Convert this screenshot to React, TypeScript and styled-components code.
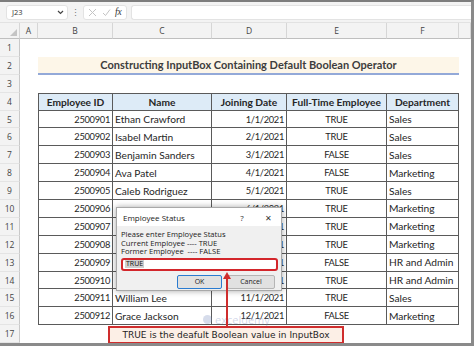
import React from 'react';
import styled, { createGlobalStyle } from 'styled-components';

const GlobalStyle = createGlobalStyle`
  html, body {
    margin: 0;
    padding: 0;
    background: #ffffff;
  }
  * {
    box-sizing: border-box;
  }
`;

const COLS = '20px 18px 75px 99px 75px 100px 72px 1fr';

type Align = 'left' | 'center' | 'right';

interface Employee {
  id: string;
  name: string;
  date: string;
  fullTime: string;
  dept: string;
}

// names of rows 10-14 sit under the dialog in the screenshot, so they stay empty
const employees: Employee[] = [
  { id: '2500901', name: 'Ethan Crawford', date: '1/1/2021', fullTime: 'TRUE', dept: 'Sales' },
  { id: '2500902', name: 'Isabel Martin', date: '2/1/2021', fullTime: 'TRUE', dept: 'Sales' },
  { id: '2500903', name: 'Benjamin Sanders', date: '3/1/2021', fullTime: 'FALSE', dept: 'Sales' },
  { id: '2500904', name: 'Ava Patel', date: '4/1/2021', fullTime: 'FALSE', dept: 'Marketing' },
  { id: '2500905', name: 'Caleb Rodriguez', date: '5/1/2021', fullTime: 'TRUE', dept: 'Sales' },
  { id: '2500906', name: '', date: '6/1/2021', fullTime: 'TRUE', dept: 'Marketing' },
  { id: '2500907', name: '', date: '7/1/2021', fullTime: 'TRUE', dept: 'Marketing' },
  { id: '2500908', name: '', date: '8/1/2021', fullTime: 'TRUE', dept: 'Marketing' },
  { id: '2500909', name: '', date: '9/1/2021', fullTime: 'FALSE', dept: 'HR and Admin' },
  { id: '2500910', name: '', date: '10/1/2021', fullTime: 'TRUE', dept: 'HR and Admin' },
  { id: '2500911', name: 'William Lee', date: '11/1/2021', fullTime: 'TRUE', dept: 'Sales' },
  { id: '2500912', name: 'Grace Jackson', date: '12/1/2021', fullTime: 'FALSE', dept: 'Marketing' },
];

const Frame = styled.div`
  position: relative;
  width: 474px;
  height: 346px;
  overflow: hidden;
  background: #ffffff;
  border-top: 2px solid #7d7d7d;
  border-right: 3px solid #8a8a8a;
  border-bottom: 3px solid #8a8a8a;
  font-family: Lato, 'Open Sans', sans-serif;
`;

/* formula bar */

const FormulaBar = styled.div`
  height: 21px;
  display: flex;
  align-items: center;
  padding-left: 6px;
  background: #f3f3f3;
  border-bottom: 1px solid #e2e2e2;
`;

const NameBox = styled.div`
  width: 62px;
  height: 15px;
  display: flex;
  align-items: center;
  justify-content: space-between;
  padding: 0 3px 0 5px;
  background: #ffffff;
  border: 1px solid #e3e3e3;
  border-radius: 3px;
  font-family: 'Open Sans', sans-serif;
  font-size: 7.5px;
  color: #333;
`;

const Dots = styled.div`
  width: 15px;
  text-align: center;
  font-size: 9px;
  color: #777;
`;

const FxBox = styled.div`
  width: 44px;
  height: 15px;
  display: flex;
  align-items: center;
  justify-content: space-around;
  background: #ffffff;
  border: 1px solid #e3e3e3;
  border-radius: 3px;
  padding: 0 2px;
`;

const FxText = styled.span`
  font-family: 'Liberation Serif', serif;
  font-style: italic;
  font-size: 9.5px;
  color: #333;
`;

const FormulaInput = styled.div`
  flex: 1;
  height: 15px;
  margin-left: 4px;
  background: #ffffff;
  border: 1px solid #e3e3e3;
  border-right: none;
  border-radius: 3px 0 0 3px;
`;

/* sheet */

const Row = styled.div<{ $h: number }>`
  display: grid;
  grid-template-columns: ${COLS};
  height: ${p => p.$h}px;
`;

const ColHead = styled.div`
  position: relative;
  display: flex;
  align-items: center;
  justify-content: center;
  background: #f3f3f3;
  border-right: 1px solid #d6d6d6;
  border-bottom: 1px solid #bfbfbf;
  font-family: 'Open Sans', sans-serif;
  font-size: 8.5px;
  color: #444;
`;

const CornerMark = styled.div`
  position: absolute;
  right: 2px;
  bottom: 2px;
  width: 0;
  height: 0;
  border-left: 7px solid transparent;
  border-bottom: 7px solid #c4c4c4;
`;

const RowNum = styled.div`
  display: flex;
  align-items: center;
  justify-content: center;
  background: #f3f3f3;
  border-right: 1px solid #c9c9c9;
  border-bottom: 1px solid #e4e4e4;
  font-family: 'Open Sans', sans-serif;
  font-size: 8.5px;
  color: #444;
`;

const Blank = styled.div``;

const TitleCell = styled.div`
  grid-column: 3 / 8;
  display: flex;
  align-items: center;
  justify-content: center;
  background: #fdf6e8;
  border-bottom: 2px solid #93a9d8;
  font-weight: 700;
  font-size: 11px;
  color: #3d3d3d;
`;

const Cell = styled.div<{ $align: Align; $head?: boolean; $first?: boolean; $num?: boolean }>`
  display: flex;
  align-items: center;
  justify-content: ${p => (p.$align === 'left' ? 'flex-start' : p.$align === 'right' ? 'flex-end' : 'center')};
  padding: 0 2px;
  white-space: nowrap;
  overflow: hidden;
  background: ${p => (p.$head ? '#ddebf7' : '#ffffff')};
  border-right: 1px solid #5a5a5a;
  border-bottom: 1px solid #5a5a5a;
  border-top: ${p => (p.$head ? '1px solid #5a5a5a' : 'none')};
  border-left: ${p => (p.$first ? '1px solid #5a5a5a' : 'none')};
  font-weight: ${p => (p.$head ? 700 : 400)};
  font-size: ${p => (p.$num ? 9.3 : 10.2)}px;
  letter-spacing: ${p => (p.$num ? '-0.3px' : 'normal')};
  color: #262626;
`;

/* dialog */

const Dialog = styled.div`
  position: absolute;
  left: 116px;
  top: 205px;
  width: 166px;
  height: 84px;
  display: flex;
  flex-direction: column;
  background: #f0f0f0;
  border: 1px solid #a8a8a8;
  box-shadow: 0 0 6px rgba(0, 0, 0, 0.35);
  font-family: 'Open Sans', 'Noto Sans', sans-serif;
`;

const DialogTitle = styled.div`
  height: 18px;
  display: flex;
  align-items: center;
  padding-left: 6px;
  background: #ffffff;
  font-size: 8px;
  color: #222;
`;

const TitleText = styled.span`
  flex: 1;
`;

const TitleButton = styled.span`
  width: 26px;
  text-align: center;
  font-size: 8px;
  color: #333;
`;

const DialogBody = styled.div`
  flex: 1;
  padding: 4px 4px 0 4px;
`;

const Prompt = styled.div`
  font-size: 7.6px;
  line-height: 8.5px;
  color: #1a1a1a;
  white-space: pre;
`;

const InputBox = styled.div`
  margin-top: 2px;
  width: 157px;
  height: 13px;
  display: flex;
  align-items: center;
  padding-left: 2px;
  background: #ffffff;
  border: 2px solid #d3262b;
  border-radius: 3px;
`;

const Selected = styled.span`
  background: #cfcfcf;
  font-size: 7px;
  line-height: 8px;
  padding: 0 1px;
  color: #111;
`;

const ButtonRow = styled.div`
  display: flex;
  justify-content: flex-end;
  gap: 5px;
  margin-top: 4px;
  padding-right: 2px;
`;

const DialogButton = styled.div<{ $primary?: boolean }>`
  width: ${p => (p.$primary ? 45 : 48)}px;
  height: 14px;
  display: flex;
  align-items: center;
  justify-content: center;
  background: #e1e1e1;
  border: 1px solid ${p => (p.$primary ? '#2a7bd0' : '#b5b5b5')};
  border-radius: 2px;
  font-size: 7px;
  color: #222;
`;

/* annotation */

const Arrow = styled.svg`
  position: absolute;
  left: 222px;
  top: 269px;
`;

const Callout = styled.div`
  position: absolute;
  left: 108px;
  top: 324px;
  width: 236px;
  height: 18px;
  display: flex;
  align-items: center;
  justify-content: center;
  background: #fcefe6;
  border: 2px solid #cf2d2d;
  font-family: 'DejaVu Sans', sans-serif;
  font-size: 9px;
  color: #1e1e1e;
`;

const Watermark = styled.div`
  position: absolute;
  left: 203px;
  top: 310px;
  display: flex;
  align-items: center;
  gap: 3px;
  font-family: 'Open Sans', sans-serif;
  font-size: 11px;
  color: rgba(120, 140, 190, 0.35);
  pointer-events: none;
`;

const WaterDot = styled.span`
  width: 9px;
  height: 9px;
  border-radius: 50%;
  background: rgba(120, 140, 190, 0.3);
`;

const ROW_H = 17.9;

const tableHeads = ['Employee ID', 'Name', 'Joining Date', 'Full-Time Employee', 'Department'];

export default function App() {
  const letters = ['A', 'B', 'C', 'D', 'E', 'F', ''];

  return (
    <>
      <GlobalStyle />
      <Frame>
        <FormulaBar>
          <NameBox>
            <span>J23</span>
            <svg width="7" height="5" viewBox="0 0 7 5">
              <path d="M1 1 L3.5 3.5 L6 1" fill="none" stroke="#444" strokeWidth="1.2" />
            </svg>
          </NameBox>
          <Dots>⋮</Dots>
          <FxBox>
            <svg width="9" height="9" viewBox="0 0 9 9">
              <path d="M1 1 L8 8 M8 1 L1 8" stroke="#c4c4c4" strokeWidth="1" />
            </svg>
            <svg width="9" height="9" viewBox="0 0 9 9">
              <path d="M1 5 L3.5 7.5 L8 1.5" fill="none" stroke="#c4c4c4" strokeWidth="1" />
            </svg>
            <FxText>fx</FxText>
          </FxBox>
          <FormulaInput />
        </FormulaBar>

        <Row $h={16}>
          <ColHead>
            <CornerMark />
          </ColHead>
          {letters.map((l, i) => (
            <ColHead key={`col${i}`}>{l}</ColHead>
          ))}
        </Row>

        {Array.from({ length: 17 }).map((_, idx) => {
          const n = idx + 1;
          if (n === 2) {
            return (
              <Row $h={ROW_H} key={n}>
                <RowNum>{n}</RowNum>
                <Blank />
                <TitleCell>Constructing InputBox Containing Default Boolean Operator</TitleCell>
              </Row>
            );
          }
          if (n === 4) {
            return (
              <Row $h={ROW_H} key={n}>
                <RowNum>{n}</RowNum>
                <Blank />
                {tableHeads.map((h, i) => (
                  <Cell key={h} $align="center" $head $first={i === 0}>
                    {h}
                  </Cell>
                ))}
              </Row>
            );
          }
          if (n >= 5 && n <= 16) {
            const e = employees[n - 5];
            return (
              <Row $h={ROW_H} key={n}>
                <RowNum>{n}</RowNum>
                <Blank />
                <Cell $align="right" $first $num>{e.id}</Cell>
                <Cell $align="left">{e.name}</Cell>
                <Cell $align="right" $num>{e.date}</Cell>
                <Cell $align="center" $num>{e.fullTime}</Cell>
                <Cell $align="left">{e.dept}</Cell>
              </Row>
            );
          }
          return (
            <Row $h={ROW_H} key={n}>
              <RowNum>{n}</RowNum>
            </Row>
          );
        })}

        <Watermark>
          <WaterDot />
          exceldemy
        </Watermark>

        <Dialog>
          <DialogTitle>
            <TitleText>Employee Status</TitleText>
            <TitleButton>?</TitleButton>
            <TitleButton>✕</TitleButton>
          </DialogTitle>
          <DialogBody>
            <Prompt>Please enter Employee Status</Prompt>
            <Prompt>Current Employee ---- TRUE</Prompt>
            <Prompt>{'Former Employee  ---- FALSE'}</Prompt>
            <InputBox>
              <Selected>TRUE</Selected>
            </InputBox>
            <ButtonRow>
              <DialogButton $primary>OK</DialogButton>
              <DialogButton>Cancel</DialogButton>
            </ButtonRow>
          </DialogBody>
        </Dialog>

        <Arrow width="10" height="57" viewBox="0 0 10 57">
          <path d="M5 56 L5 6" stroke="#cf2d2d" strokeWidth="2" />
          <path d="M1 8 L5 1 L9 8 Z" fill="#cf2d2d" />
        </Arrow>

        <Callout>TRUE is the deafult Boolean value in InputBox</Callout>
      </Frame>
    </>
  );
}
